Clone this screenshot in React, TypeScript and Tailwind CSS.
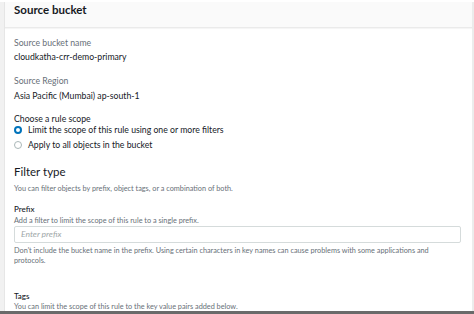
export default function App() {
  return (
    <div
      className="w-[474px] h-[314px] bg-white flex flex-col overflow-hidden"
      style={{ fontFamily: 'Lato, "Open Sans", sans-serif' }}
    >
      <div className="flex flex-1 min-h-0 pt-[2px]">
        {/* left gutter */}
        <div className="w-[5px] bg-[#f1f1f1] border-r border-[#e6e6e6]" />

        {/* card */}
        <div className="flex-1 flex flex-col border-r-2 border-[#ececec]">
          <div className="h-[26px] bg-[#fafafa] border-b border-[#eaeaea] shadow-[0_1px_1px_rgba(0,0,0,0.04)] px-[9px] pt-[2px]">
            <h2 className="text-[11.5px] font-bold text-[#16191f] leading-[12px]">
              Source bucket
            </h2>
          </div>

          <div className="px-[9px] flex flex-col text-[#16191f]">
            <div className="mt-[10px] text-[8.7px] leading-[10px] text-[#687078]">Source bucket name</div>
            <div className="mt-[4px] text-[8.7px] leading-[10px]">cloudkatha-crr-demo-primary</div>

            <div className="mt-[14px] text-[8.7px] leading-[10px] text-[#687078]">Source Region</div>
            <div className="mt-[5px] text-[8.7px] leading-[10px]">Asia Pacific (Mumbai) ap-south-1</div>

            <div className="mt-[13px] text-[8.7px] leading-[10px]">Choose a rule scope</div>
            <div className="mt-[1px] flex flex-col gap-[5px]">
              <label className="flex items-center gap-[6px] text-[8.7px] leading-[10px]">
                <span className="w-[8px] h-[8px] rounded-full border-[2.5px] border-[#0073bb] bg-white" />
                Limit the scope of this rule using one or more filters
              </label>
              <label className="flex items-center gap-[6px] text-[8.7px] leading-[10px]">
                <span className="w-[8px] h-[8px] rounded-full border border-[#aab7b8] bg-white" />
                Apply to all objects in the bucket
              </label>
            </div>

            <h3 className="mt-[16px] text-[11.5px] leading-[12px] text-[#16191f]">Filter type</h3>
            <p className="mt-[6px] text-[7.3px] leading-[9px] text-[#687078]">
              You can filter objects by prefix, object tags, or a combination of both.
            </p>

            <div className="mt-[12px] text-[8px] leading-[9px] font-medium">Prefix</div>
            <p className="mt-[2px] text-[7.3px] leading-[9px] text-[#687078]">
              Add a filter to limit the scope of this rule to a single prefix.
            </p>
            <div className="mt-[1px] h-[17px] w-[447px] border border-[#d5dbdb] rounded-[2px] flex items-center px-[6px]">
              <span className="text-[8.5px] italic text-[#9ea7a8]">Enter prefix</span>
            </div>
            <p className="mt-[3px] text-[7.3px] leading-[10px] text-[#687078] w-[425px]">
              Don't include the bucket name in the prefix. Using certain characters in key names can cause problems with some applications and protocols.
            </p>

            <div className="mt-[26px] text-[8px] leading-[9px] font-medium">Tags</div>
            <p className="mt-[1px] text-[7.3px] leading-[9px] text-[#687078]">
              You can limit the scope of this rule to the key value pairs added below.
            </p>
          </div>
        </div>
      </div>
      <div className="h-[3px] bg-[#6a6a6a]" />
    </div>
  );
}
